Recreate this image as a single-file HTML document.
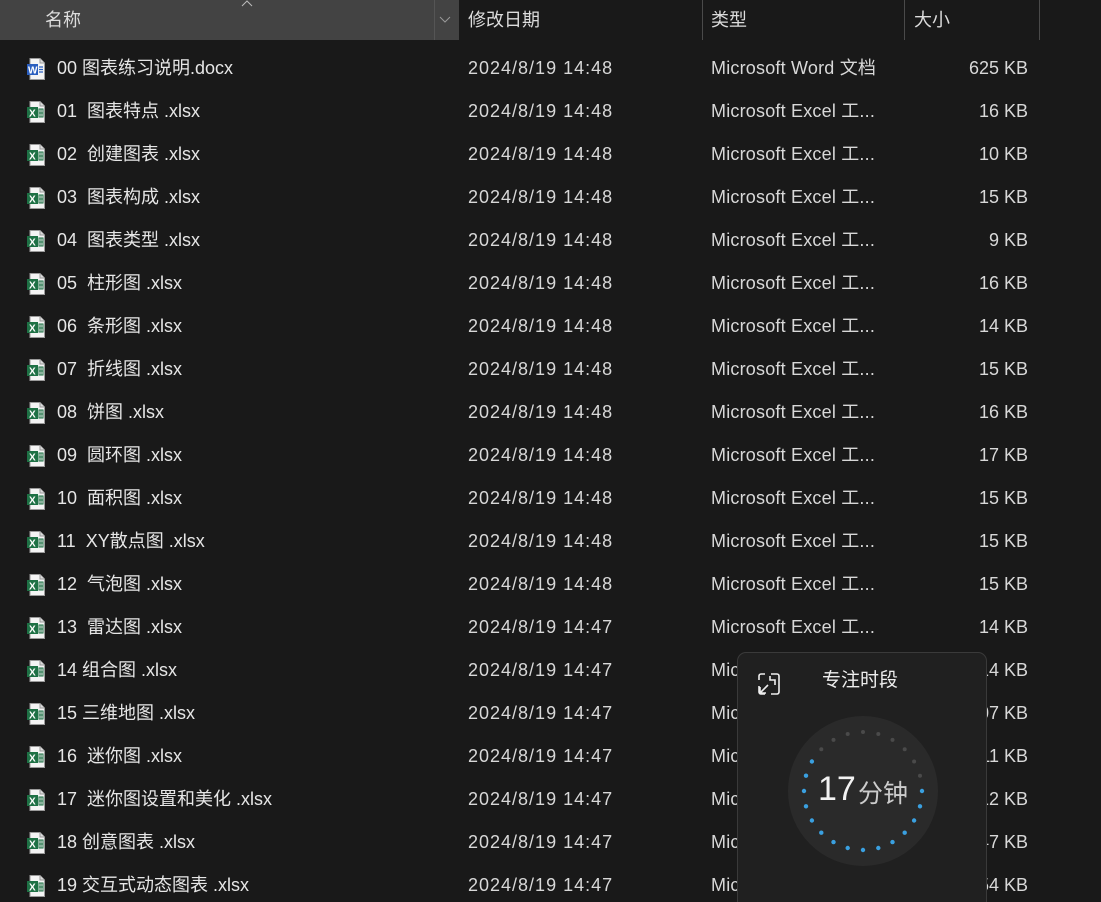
<!DOCTYPE html>
<html style="overflow:hidden"><head><meta charset="utf-8"><style>
html,body{overflow:hidden;height:902px}
body{margin:0;width:1101px;background:#191919;position:relative;font-family:"Liberation Sans","Noto Sans CJK SC",sans-serif;color:#e6e6e6;font-size:18px}
.hd{position:absolute;top:0;left:0;width:1101px;height:40px;background:#191919}
.hn{position:absolute;left:0;top:0;width:459px;height:40px;background:#434343}
.dv{position:absolute;top:0;width:1px;height:40px;background:#4a4a4a}
.ht{position:absolute;top:10px;font-size:18px;line-height:20px;color:#dcdcdc}
.r{position:absolute;left:0;width:1101px;height:43px}
.r span{position:absolute;top:11px;line-height:20px;white-space:pre}
.n{left:57px}.d{left:468px;color:#d8d8d8;letter-spacing:1px}.t{left:711px;color:#d8d8d8;letter-spacing:0.2px}.s{right:73px;color:#d8d8d8}
.r svg{position:absolute;left:27px;top:11px}
.pop{position:absolute;left:737px;top:652px;width:248px;height:280px;background:#202020;border:1px solid #3a3a3a;border-radius:9px}
</style></head><body>
<div class="hd"><div class="hn"></div>
<svg style="position:absolute;left:240px;top:0" width="14" height="8"><path d="M2 6 L7 1 L12 6" stroke="#bbb" fill="none" stroke-width="1"/></svg>
<div class="dv" style="left:434px;background:#555"></div>
<svg style="position:absolute;left:439px;top:16px" width="12" height="8"><path d="M1 1 L6 6 L11 1" stroke="#999" fill="none"/></svg>
<div class="dv" style="left:702px"></div><div class="dv" style="left:904px"></div><div class="dv" style="left:1039px"></div>
<span class="ht" style="left:45px">名称</span><span class="ht" style="left:468px">修改日期</span><span class="ht" style="left:711px">类型</span><span class="ht" style="left:914px">大小</span>
</div>
<svg width="0" height="0" style="position:absolute"><defs>
<g id="doc"><path d="M3 0.5 H13 L17.5 5 V21.5 H3 Z" fill="#f4f4f4" stroke="#9a9a9a"/><path d="M13 0.5 V5 H17.5" fill="#ddd" stroke="#9a9a9a"/></g>
<g id="xl"><use href="#doc"/><rect x="0" y="6" width="11" height="11" fill="#1e7145"/><text x="2" y="15.5" font-size="10" font-weight="bold" fill="#fff" font-family="Liberation Sans">X</text><path d="M12 8h4v8h-4zM12 12h4M14 8v8" stroke="#1e7145" fill="none" stroke-width="1"/></g>
</defs></svg>
<div class="r" style="top:47px"><svg width="20" height="22"><use href="#doc"/><rect x="0" y="6" width="11" height="11" fill="#2b5fbf"/><text x="1" y="15.5" font-size="10" font-weight="bold" fill="#fff" font-family="Liberation Sans">W</text><path d="M12 9h4M12 11.5h4M12 14h4" stroke="#2b5fbf" stroke-width="1.2"/></svg><span class="n">00 图表练习说明.docx</span><span class="d">2024/8/19 14:48</span><span class="t">Microsoft Word 文档</span><span class="s">625 KB</span></div>
<div class="r" style="top:90px"><svg width="20" height="22"><use href="#xl"/></svg><span class="n">01  图表特点 .xlsx</span><span class="d">2024/8/19 14:48</span><span class="t">Microsoft Excel 工...</span><span class="s">16 KB</span></div>
<div class="r" style="top:133px"><svg width="20" height="22"><use href="#xl"/></svg><span class="n">02  创建图表 .xlsx</span><span class="d">2024/8/19 14:48</span><span class="t">Microsoft Excel 工...</span><span class="s">10 KB</span></div>
<div class="r" style="top:176px"><svg width="20" height="22"><use href="#xl"/></svg><span class="n">03  图表构成 .xlsx</span><span class="d">2024/8/19 14:48</span><span class="t">Microsoft Excel 工...</span><span class="s">15 KB</span></div>
<div class="r" style="top:219px"><svg width="20" height="22"><use href="#xl"/></svg><span class="n">04  图表类型 .xlsx</span><span class="d">2024/8/19 14:48</span><span class="t">Microsoft Excel 工...</span><span class="s">9 KB</span></div>
<div class="r" style="top:262px"><svg width="20" height="22"><use href="#xl"/></svg><span class="n">05  柱形图 .xlsx</span><span class="d">2024/8/19 14:48</span><span class="t">Microsoft Excel 工...</span><span class="s">16 KB</span></div>
<div class="r" style="top:305px"><svg width="20" height="22"><use href="#xl"/></svg><span class="n">06  条形图 .xlsx</span><span class="d">2024/8/19 14:48</span><span class="t">Microsoft Excel 工...</span><span class="s">14 KB</span></div>
<div class="r" style="top:348px"><svg width="20" height="22"><use href="#xl"/></svg><span class="n">07  折线图 .xlsx</span><span class="d">2024/8/19 14:48</span><span class="t">Microsoft Excel 工...</span><span class="s">15 KB</span></div>
<div class="r" style="top:391px"><svg width="20" height="22"><use href="#xl"/></svg><span class="n">08  饼图 .xlsx</span><span class="d">2024/8/19 14:48</span><span class="t">Microsoft Excel 工...</span><span class="s">16 KB</span></div>
<div class="r" style="top:434px"><svg width="20" height="22"><use href="#xl"/></svg><span class="n">09  圆环图 .xlsx</span><span class="d">2024/8/19 14:48</span><span class="t">Microsoft Excel 工...</span><span class="s">17 KB</span></div>
<div class="r" style="top:477px"><svg width="20" height="22"><use href="#xl"/></svg><span class="n">10  面积图 .xlsx</span><span class="d">2024/8/19 14:48</span><span class="t">Microsoft Excel 工...</span><span class="s">15 KB</span></div>
<div class="r" style="top:520px"><svg width="20" height="22"><use href="#xl"/></svg><span class="n">11  XY散点图 .xlsx</span><span class="d">2024/8/19 14:48</span><span class="t">Microsoft Excel 工...</span><span class="s">15 KB</span></div>
<div class="r" style="top:563px"><svg width="20" height="22"><use href="#xl"/></svg><span class="n">12  气泡图 .xlsx</span><span class="d">2024/8/19 14:48</span><span class="t">Microsoft Excel 工...</span><span class="s">15 KB</span></div>
<div class="r" style="top:606px"><svg width="20" height="22"><use href="#xl"/></svg><span class="n">13  雷达图 .xlsx</span><span class="d">2024/8/19 14:47</span><span class="t">Microsoft Excel 工...</span><span class="s">14 KB</span></div>
<div class="r" style="top:649px"><svg width="20" height="22"><use href="#xl"/></svg><span class="n">14 组合图 .xlsx</span><span class="d">2024/8/19 14:47</span><span class="t">Microsoft Excel 工...</span><span class="s">14 KB</span></div>
<div class="r" style="top:692px"><svg width="20" height="22"><use href="#xl"/></svg><span class="n">15 三维地图 .xlsx</span><span class="d">2024/8/19 14:47</span><span class="t">Microsoft Excel 工...</span><span class="s">107 KB</span></div>
<div class="r" style="top:735px"><svg width="20" height="22"><use href="#xl"/></svg><span class="n">16  迷你图 .xlsx</span><span class="d">2024/8/19 14:47</span><span class="t">Microsoft Excel 工...</span><span class="s">11 KB</span></div>
<div class="r" style="top:778px"><svg width="20" height="22"><use href="#xl"/></svg><span class="n">17  迷你图设置和美化 .xlsx</span><span class="d">2024/8/19 14:47</span><span class="t">Microsoft Excel 工...</span><span class="s">12 KB</span></div>
<div class="r" style="top:821px"><svg width="20" height="22"><use href="#xl"/></svg><span class="n">18 创意图表 .xlsx</span><span class="d">2024/8/19 14:47</span><span class="t">Microsoft Excel 工...</span><span class="s">47 KB</span></div>
<div class="r" style="top:864px"><svg width="20" height="22"><use href="#xl"/></svg><span class="n">19 交互式动态图表 .xlsx</span><span class="d">2024/8/19 14:47</span><span class="t">Microsoft Excel 工...</span><span class="s">54 KB</span></div>

<div class="pop">
<svg style="position:absolute;left:19px;top:19px" width="24" height="24" viewBox="0 0 24 24" fill="none" stroke="#eee" stroke-width="1.6"><path d="M8 2H4a2 2 0 0 0-2 2v4M14 2h6a2 2 0 0 1 2 2v16a2 2 0 0 1-2 2H14M2 14v6a2 2 0 0 0 2 2h4"/><path d="M3 21L11 13M3 15v6h6"/><path d="M13 4v4h5v5"/></svg>
<span style="position:absolute;left:84px;top:17px;line-height:22px;font-size:19px;color:#eee">专注时段</span>
<svg style="position:absolute;left:49px;top:62px" width="152" height="152" viewBox="-76 -76 152 152">
<circle r="75" fill="#2a2a2a"/>
<g fill="#4a4a4a">
<circle cx="0" cy="-59" r="2"/><circle cx="15.3" cy="-57" r="2"/><circle cx="29.5" cy="-51.1" r="2"/><circle cx="41.7" cy="-41.7" r="2"/><circle cx="51.1" cy="-29.5" r="2"/><circle cx="57" cy="-15.3" r="2"/>
<circle cx="-15.3" cy="-57" r="2"/><circle cx="-29.5" cy="-51.1" r="2"/><circle cx="-41.7" cy="-41.7" r="2"/></g>
<g fill="#3aa0e0">
<circle cx="59" cy="0" r="2.2"/><circle cx="57" cy="15.3" r="2.2"/><circle cx="51.1" cy="29.5" r="2.2"/><circle cx="41.7" cy="41.7" r="2.2"/><circle cx="29.5" cy="51.1" r="2.2"/><circle cx="15.3" cy="57" r="2.2"/><circle cx="0" cy="59" r="2.2"/>
<circle cx="-15.3" cy="57" r="2.2"/><circle cx="-29.5" cy="51.1" r="2.2"/><circle cx="-41.7" cy="41.7" r="2.2"/><circle cx="-51.1" cy="29.5" r="2.2"/><circle cx="-57" cy="15.3" r="2.2"/><circle cx="-59" cy="0" r="2.2"/><circle cx="-57" cy="-15.3" r="2.2"/><circle cx="-51.1" cy="-29.5" r="2.2"/></g>
</svg>
<span style="position:absolute;left:80px;top:118px;line-height:36px;font-size:34px;color:#f2f2f2">17</span>
<span style="position:absolute;left:120px;top:126px;line-height:30px;font-size:25px;color:#ccc">分钟</span>
</div>
</body></html>
